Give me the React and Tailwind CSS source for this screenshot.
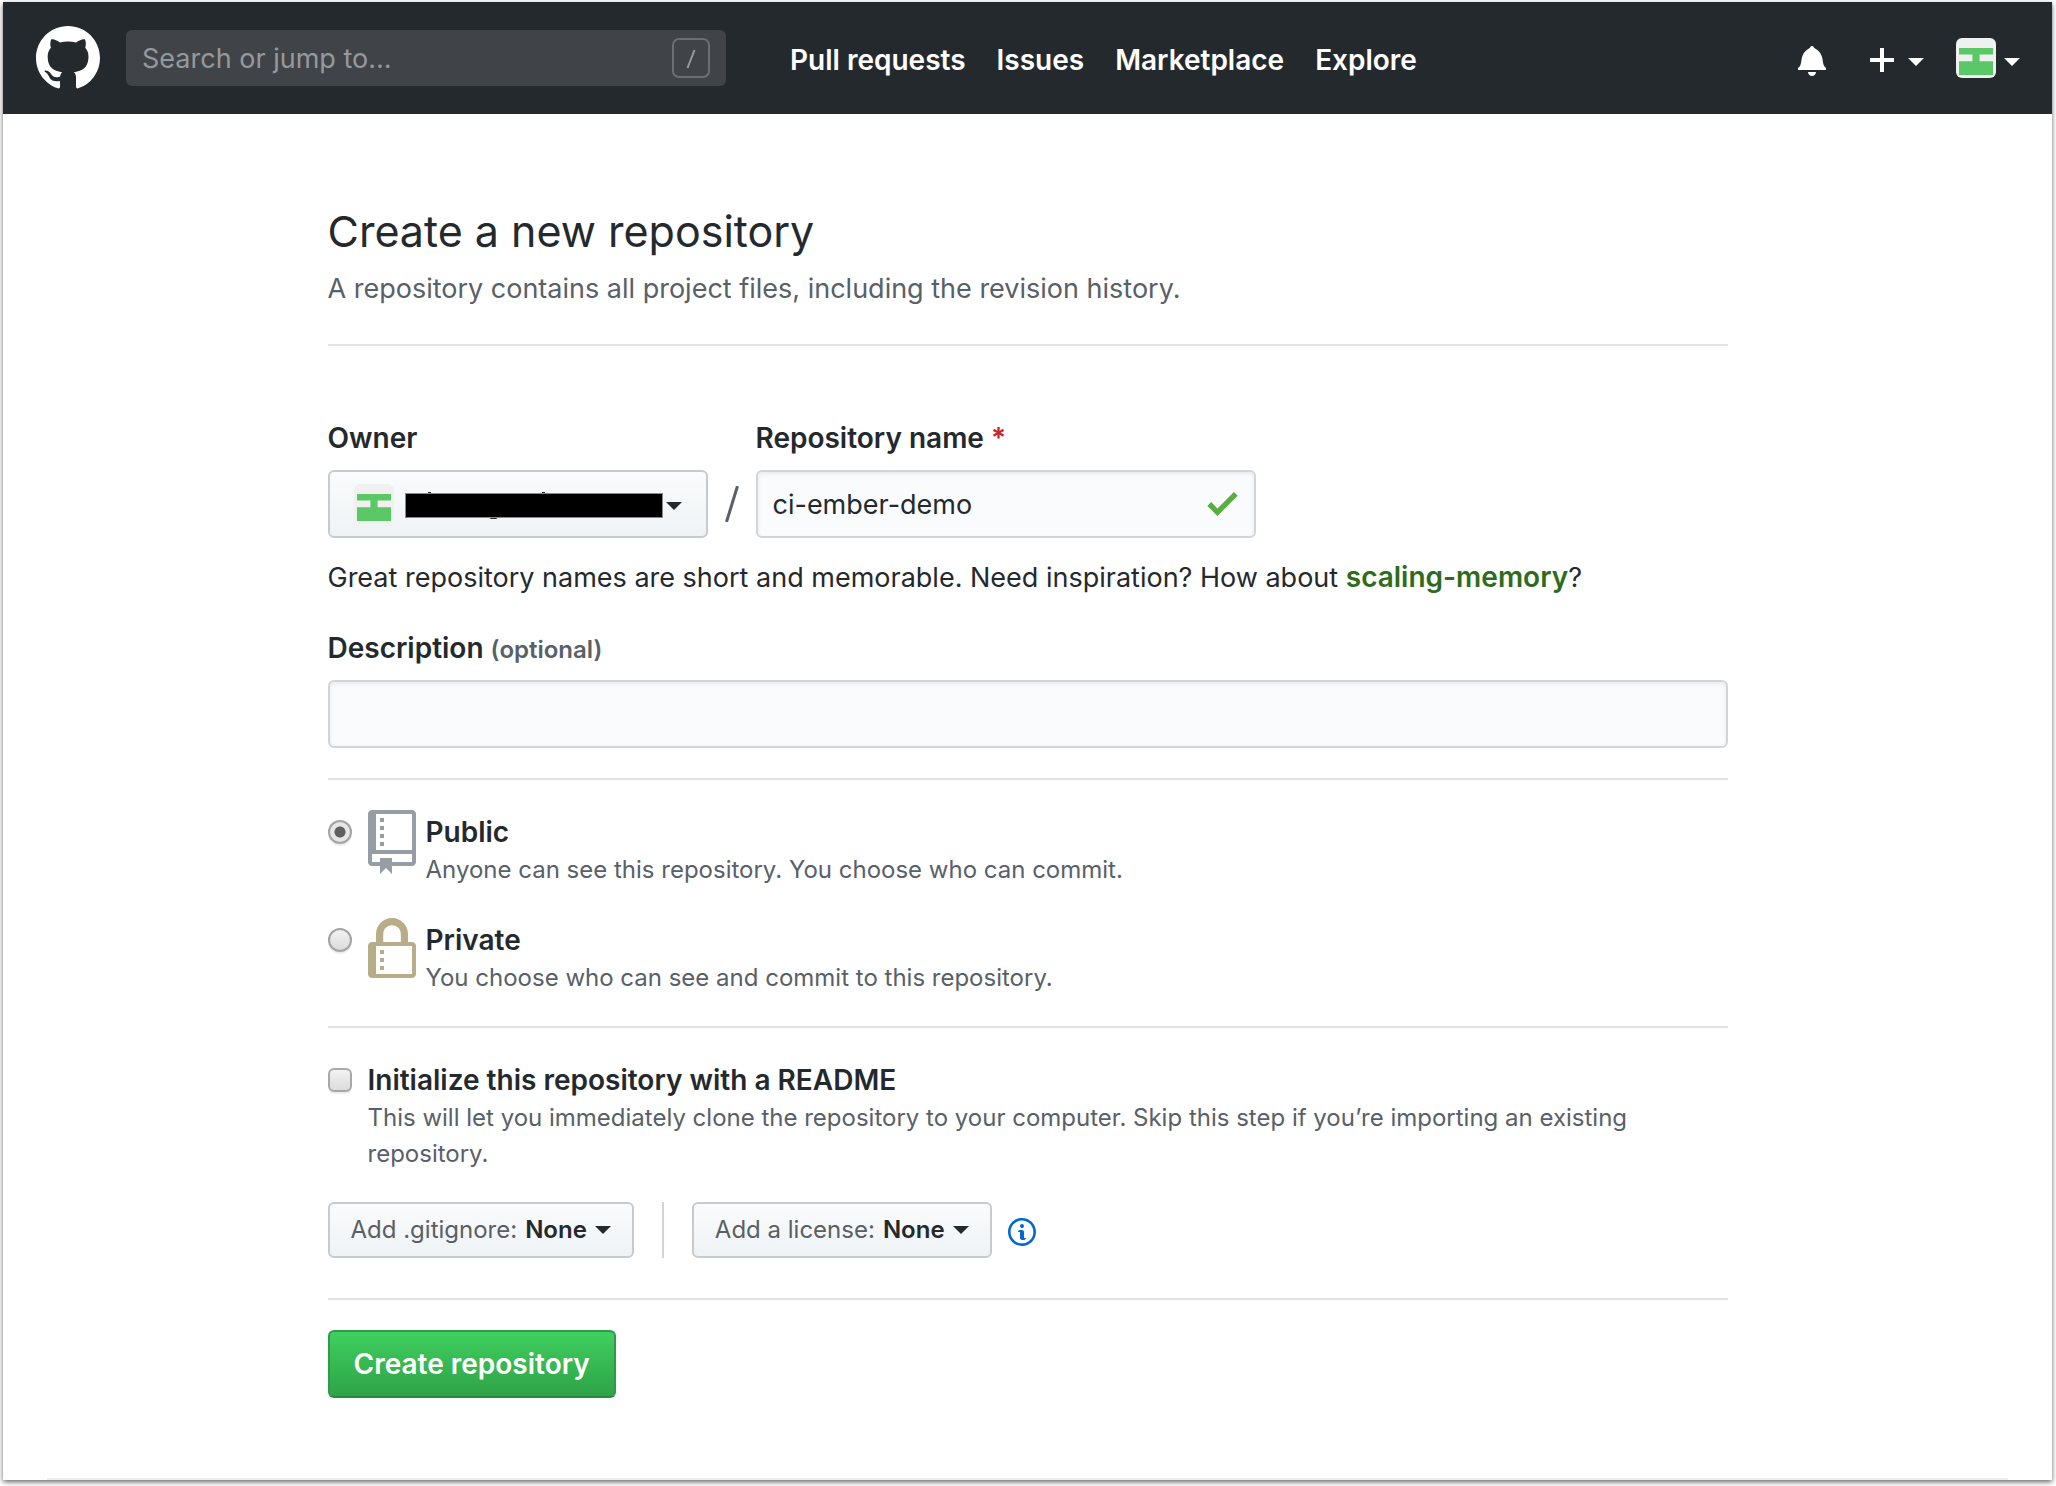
import React, { useState } from 'react';

const Caret = ({ className = '' }) => (
    <svg viewBox="0 0 16 8" className={`h-2 w-4 shrink-0 fill-current ${className}`} aria-hidden="true">
        <path d="M0 0h16L8 8z" />
    </svg>
);

const Identicon = ({ className = '' }) => (
    <svg viewBox="0 0 40 40" className={`h-10 w-10 shrink-0 rounded-md ${className}`} aria-hidden="true">
        <rect width="40" height="40" fill="#f0f0f0" />
        <path fill="#5ac867" d="M3 10h34v6.6H23.6v6.6H37V37H3V23.2h13.4v-6.6H3z" />
    </svg>
);

const MarkGithub = () => (
    <svg viewBox="0 0 16 16" className="h-16 w-16 fill-white" aria-hidden="true">
        <path
            fillRule="evenodd"
            d="M8 0C3.58 0 0 3.58 0 8c0 3.54 2.29 6.53 5.47 7.59.4.07.55-.17.55-.38 0-.19-.01-.82-.01-1.49-2.01.37-2.53-.49-2.69-.94-.09-.23-.48-.94-.82-1.13-.28-.15-.68-.52-.01-.53.63-.01 1.08.58 1.23.82.72 1.21 1.87.87 2.33.66.07-.52.28-.87.51-1.07-1.78-.2-3.64-.89-3.64-3.95 0-.87.31-1.59.82-2.15-.08-.2-.36-1.02.08-2.12 0 0 .67-.21 2.2.82.64-.18 1.32-.27 2-.27.68 0 1.36.09 2 .27 1.53-1.04 2.2-.82 2.2-.82.44 1.1.16 1.92.08 2.12.51.56.82 1.27.82 2.15 0 3.07-1.87 3.75-3.65 3.95.29.25.54.73.54 1.48 0 1.07-.01 1.93-.01 2.2 0 .21.15.46.55.38A8.013 8.013 0 0 0 16 8c0-4.42-3.58-8-8-8z"
        />
    </svg>
);

const RepoIcon = () => (
    <svg viewBox="0 0 12 16" className="h-16 w-12 fill-[#959da5]" aria-hidden="true">
        <path
            fillRule="evenodd"
            d="M4 9H3V8h1v1zm0-3H3v1h1V6zm0-2H3v1h1V4zm0-2H3v1h1V2zm8-1v12c0 .55-.45 1-1 1H6v2l-1.5-1.5L3 16v-2H1c-.55 0-1-.45-1-1V1c0-.55.45-1 1-1h10c.55 0 1 .45 1 1zm-1 10H1v2h2v-1h3v1h5v-2zm0-10H2v9h9V1z"
        />
    </svg>
);

const LockIcon = () => (
    <svg viewBox="0 0 12 16" className="h-16 w-12 fill-[#b8ac89]" aria-hidden="true">
        <path
            fillRule="evenodd"
            d="M4 13H3v-1h1v1zm8-6v7c0 .55-.45 1-1 1H1c-.55 0-1-.45-1-1V7c0-.55.45-1 1-1h1V4c0-2.2 1.8-4 4-4s4 1.8 4 4v2h1c.55 0 1 .45 1 1zM3.8 6h4.41V4c0-1.22-.98-2.2-2.2-2.2-1.22 0-2.2.98-2.2 2.2v2H3.8zM11 7H2v7h9V7zM4 8H3v1h1V8zm0 2H3v1h1v-1z"
        />
    </svg>
);

const InfoIcon = () => (
    <svg viewBox="0 0 14 16" className="h-8 w-7 fill-[#0366d6]" aria-hidden="true">
        <path
            fillRule="evenodd"
            d="M6.3 5.69a.942.942 0 0 1-.28-.7c0-.28.09-.52.28-.7.19-.18.42-.28.7-.28.28 0 .52.09.7.28.18.19.28.42.28.7 0 .28-.09.52-.28.7a1 1 0 0 1-.7.3c-.28 0-.52-.11-.7-.3zM8 7.99c-.02-.25-.11-.48-.31-.69-.2-.19-.42-.3-.69-.31H6c-.27.02-.48.13-.69.31-.2.2-.3.44-.31.69h1v3c.02.27.11.5.31.69.2.2.42.31.69.31h1c.27 0 .48-.11.69-.31.2-.19.3-.42.31-.69H8V7.98v.01zM7 2.3c-3.14 0-5.7 2.54-5.7 5.68 0 3.14 2.56 5.7 5.7 5.7s5.7-2.55 5.7-5.7c0-3.15-2.56-5.69-5.7-5.69v.01zM7 .98c3.86 0 7 3.14 7 7s-3.14 7-7 7-7-3.12-7-7 3.14-7 7-7z"
        />
    </svg>
);

const navLinks = ['Pull requests', 'Issues', 'Marketplace', 'Explore'];

const visibilityOptions = [
    {
        id: 'public',
        title: 'Public',
        note: 'Anyone can see this repository. You choose who can commit.',
        Icon: RepoIcon
    },
    {
        id: 'private',
        title: 'Private',
        note: 'You choose who can see and commit to this repository.',
        Icon: LockIcon
    }
];

const Header = () => (
    <header className="flex h-28 items-center bg-[#24292e] pl-[33px] pr-8 text-white">
        <a href="#home" aria-label="Homepage">
            <MarkGithub />
        </a>
        <div className="ml-[26px] flex h-14 w-[600px] items-center rounded-md bg-[#404448] pl-4 pr-4">
            <input
                type="text"
                aria-label="Search or jump to"
                placeholder="Search or jump to…"
                className="h-full min-w-0 flex-1 bg-transparent text-[27px] text-white outline-none placeholder:text-[#96999b]"
            />
            <svg viewBox="0 0 38 40" className="h-10 w-[38px]" fill="none" aria-hidden="true">
                <rect x="1" y="1" width="36" height="38" rx="6" stroke="#6b6f72" strokeWidth="2" />
                <path d="M22.5 12l-7 18" stroke="#979a9c" strokeWidth="2" />
            </svg>
        </div>
        <nav className="ml-16 flex gap-[31px] pt-1 text-[28px] font-semibold">
            {navLinks.map((name) => (
                <a key={name} href="#nav" className="whitespace-nowrap">{name}</a>
            ))}
        </nav>
        <div className="ml-auto flex items-center">
            <button type="button" aria-label="Notifications" className="pt-1">
                <svg viewBox="0 0 14 16" className="h-8 w-7 fill-white" aria-hidden="true">
                    <path
                        fillRule="evenodd"
                        d="M14 12v1H0v-1l.73-.58c.77-.77.81-2.55 1.19-4.42C2.69 3.23 6 2 6 2c0-.55.45-1 1-1s1 .45 1 1c0 0 3.39 1.23 4.16 5 .38 1.88.42 3.66 1.19 4.42l.66.58H14zm-7 4c1.11 0 2-.89 2-2H5c0 1.11.89 2 2 2z"
                    />
                </svg>
            </button>
            <button type="button" aria-label="Create new" className="ml-11 flex items-center pt-1">
                <svg viewBox="0 0 12 16" className="h-8 w-6 fill-white" aria-hidden="true">
                    <path d="M12 9H7v5H5V9H0V7h5V2h2v5h5v2z" />
                </svg>
                <Caret className="ml-[14px] mt-1" />
            </button>
            <button type="button" aria-label="Account menu" className="ml-8 flex items-center">
                <Identicon />
                <Caret className="ml-2 mt-2" />
            </button>
        </div>
    </header>
);

const MenuButton = ({ label, value }) => (
    <button
        type="button"
        aria-haspopup="menu"
        className="flex h-14 items-center rounded-md border-2 border-[#c8cbce] bg-linear-to-b from-[#fafbfc] to-[#eff3f6] px-[21px] text-[24px] text-[#5b5f63]"
    >
        {label}
        <span className="ml-2 font-semibold text-[#24292e]">{value}</span>
        <Caret className="ml-2 text-[#24292e]" />
    </button>
);

const App = () => {
    const [repoName, setRepoName] = useState('ci-ember-demo');
    const [description, setDescription] = useState('');
    const [visibility, setVisibility] = useState('public');
    const [readme, setReadme] = useState(false);

    return (
        <div className="bg-white pb-1.5 pl-[3px] pr-1 pt-0.5 font-[Inter,sans-serif] text-[27px] leading-10 text-[#24292e]">
            <div className="bg-white shadow-[0_2px_5px_rgba(0,0,0,0.6)]">
                <Header />

                <main className="mx-auto max-w-[1400px] pb-20 pt-[86px]">
                    <div className="border-b-2 border-[#e1e4e8] pb-7">
                        <h1 className="text-[43px] leading-[62px]">Create a new repository</h1>
                        <p className="leading-[54px] text-[#586069]">
                            A repository contains all project files, including the revision history.
                        </p>
                    </div>

                    <form className="pt-18" onSubmit={(e) => e.preventDefault()}>
                        <div className="flex">
                            <div>
                                <label htmlFor="owner" className="mb-3 block text-[28px] leading-10 font-semibold">Owner</label>
                                <button
                                    id="owner"
                                    type="button"
                                    aria-haspopup="menu"
                                    className="flex h-[68px] w-[380px] items-center rounded-md border-2 border-[#c8cbce] bg-linear-to-b from-[#fafbfc] to-[#eff3f6] pl-6"
                                >
                                    <Identicon />
                                    {/* account name, blacked out */}
                                    <svg viewBox="0 0 258 30" className="ml-[11px] h-[30px] w-[258px]" aria-hidden="true">
                                        <path fill="#24292e" d="M23 3h3v3h-3zM137 3h3v3h-3zM83 28h11l-3 2h-5z" />
                                        <rect x=".5" y="4.5" width="257" height="24" fill="#000" stroke="#8a8a8a" />
                                    </svg>
                                    <Caret className="ml-[3px] mt-1" />
                                </button>
                            </div>
                            <svg viewBox="0 0 14 36" className="mx-[17px] mt-[68px] h-9 w-[14px]" aria-hidden="true">
                                <path d="M12.5 0L1.5 36" stroke="#586069" strokeWidth="3" />
                            </svg>
                            <div>
                                <label htmlFor="repo-name" className="mb-3 block text-[28px] leading-10 font-semibold">
                                    Repository name <span className="text-[#cb2431]">*</span>
                                </label>
                                <div className="relative">
                                    <input
                                        id="repo-name"
                                        type="text"
                                        value={repoName}
                                        onChange={(e) => setRepoName(e.target.value)}
                                        className="h-[68px] w-[500px] rounded-md border-2 border-[#d1d5da] bg-[#fafbfc] pl-[15px] pr-16 shadow-[inset_0_2px_4px_rgba(27,31,35,0.075)] outline-none"
                                    />
                                    <svg viewBox="0 3.5 12 9.5" className="absolute right-[18px] top-[22px] h-6 w-[31px] fill-[#5aad3f]" aria-hidden="true">
                                        <path d="M12 5l-8 8-4-4 1.5-1.5L4 10l6.5-6.5L12 5z" />
                                    </svg>
                                </div>
                            </div>
                        </div>

                        <p className="mt-5">
                            Great repository names are short and memorable. Need inspiration? How about{' '}
                            <button
                                type="button"
                                onClick={() => setRepoName('scaling-memory')}
                                className="text-[28px] leading-none font-semibold text-[#2f6b1c]"
                            >
                                scaling-memory
                            </button>
                            ?
                        </p>

                        <label htmlFor="description" className="mb-3 mt-[30px] block text-[28px] leading-10 font-semibold">
                            Description <span className="text-[24px] leading-none text-[#586069]">(optional)</span>
                        </label>
                        <input
                            id="description"
                            type="text"
                            value={description}
                            onChange={(e) => setDescription(e.target.value)}
                            className="block h-[68px] w-full rounded-md border-2 border-[#d1d5da] bg-[#fafbfc] px-4 shadow-[inset_0_2px_4px_rgba(27,31,35,0.075)] outline-none"
                        />

                        <div className="mt-[30px] flex flex-col gap-8 border-y-2 border-[#dfe2e5] pb-[30px] pt-8">
                            {visibilityOptions.map(({ id, title, note, Icon }) => (
                                <div key={id} className="flex h-[76px] items-start">
                                    <input
                                        id={id}
                                        type="radio"
                                        name="visibility"
                                        checked={visibility === id}
                                        onChange={() => setVisibility(id)}
                                        className="mt-2 h-6 w-6 shrink-0 appearance-none rounded-full border-2 border-[#a3a3a3] bg-linear-to-b from-[#f2f2f2] to-[#dcdcdc] shadow-[0_2px_1px_rgba(0,0,0,0.07)] checked:bg-[radial-gradient(circle,#5f5f5f_5px,#e6e6e6_6px)]"
                                    />
                                    <span className="-mt-0.5 ml-4">
                                        <Icon />
                                    </span>
                                    <div className="ml-2.5">
                                        <label htmlFor={id} className="block text-[28px] leading-10 font-semibold">{title}</label>
                                        <p className="text-[24px] leading-9 text-[#586069]">{note}</p>
                                    </div>
                                </div>
                            ))}
                        </div>

                        <div className="flex items-start pt-8">
                            <input
                                id="readme"
                                type="checkbox"
                                checked={readme}
                                onChange={(e) => setReadme(e.target.checked)}
                                className="mt-2 h-6 w-6 shrink-0 appearance-none rounded-md border-2 border-[#a8a8a8] bg-linear-to-b from-[#f2f2f2] to-[#dcdcdc] shadow-[0_2px_1px_rgba(0,0,0,0.07)] checked:bg-[radial-gradient(circle,#5f5f5f_5px,#e6e6e6_6px)]"
                            />
                            <div className="ml-4">
                                <label htmlFor="readme" className="block text-[28px] leading-10 font-semibold">
                                    Initialize this repository with a README
                                </label>
                                <p className="text-[24px] leading-9 text-[#586069]">
                                    This will let you immediately clone the repository to your computer. Skip this step if you’re importing an existing repository.
                                </p>
                            </div>
                        </div>

                        <div className="mt-[30px] flex items-center border-b-2 border-[#dfe2e5] pb-10">
                            <MenuButton label="Add .gitignore:" value="None" />
                            <div className="mx-7 h-14 border-l-2 border-[#d1d5da]" />
                            <MenuButton label="Add a license:" value="None" />
                            <a href="#licenses" aria-label="About licenses" className="ml-4 mt-1">
                                <InfoIcon />
                            </a>
                        </div>

                        <button
                            type="submit"
                            className="mt-[30px] h-[68px] rounded-md border-2 border-[#2f9a49] border-b-[#288a40] bg-linear-to-b from-[#3fcf5f] to-[#2fa347] px-6 text-[28px] font-semibold text-white"
                        >
                            Create repository
                        </button>
                    </form>
                </main>

                <div className="mx-11 h-0.5 bg-[#eaecef]" />
            </div>
        </div>
    );
};

export default App;
